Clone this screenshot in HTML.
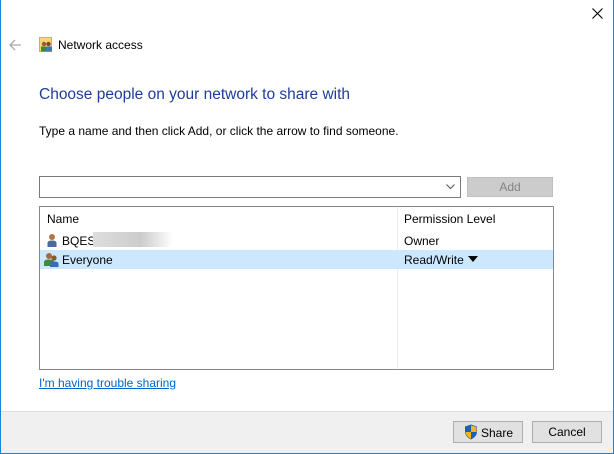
<!DOCTYPE html>
<html><head><meta charset="utf-8"><style>
*{margin:0;padding:0;box-sizing:border-box}
body{width:614px;height:454px;overflow:hidden;background:#fff;font-family:"Liberation Sans",sans-serif;font-size:12px;color:#000;position:relative}
.a{position:absolute}
.frame{left:0;top:0;width:614px;height:454px;border:1px solid #1883d7;border-top:none}
</style></head><body>
<div class="a frame"></div>
<svg class="a" style="left:592px;top:8px" width="11" height="11"><path d="M0.5 0.5L10.5 10.5M10.5 0.5L0.5 10.5" stroke="#000" stroke-width="1.1"/></svg>
<svg class="a" style="left:9px;top:39px" width="13" height="12"><path d="M1 6H12M6 1L1 6L6 11" stroke="#aaa" stroke-width="1.3" fill="none"/></svg>
<svg class="a" style="left:39px;top:37px" width="14" height="15"><rect x="0.5" y="0.5" width="12" height="14" fill="#f6d67a" stroke="#d9b040"/><circle cx="5" cy="7" r="2.2" fill="#a05a30"/><rect x="2" y="9.5" width="6" height="5" fill="#3b8a3b"/><circle cx="9.5" cy="7" r="2.2" fill="#7a4a2a"/><rect x="7" y="9.5" width="6" height="5" fill="#3a78c0"/></svg>
<div class="a" style="left:58px;top:38px;font-size:12px">Network access</div>
<div class="a" style="left:39px;top:86px;font-size:15.5px;color:#1e3d9a">Choose people on your network to share with</div>
<div class="a" style="left:39px;top:124px">Type a name and then click Add, or click the arrow to find someone.</div>
<div class="a" style="left:39px;top:176px;width:422px;height:22px;border:1px solid #7a7a7a"></div>
<svg class="a" style="left:446px;top:184px" width="9" height="6"><path d="M0.5 0.5L4.5 4.5L8.5 0.5" stroke="#555" fill="none"/></svg>
<div class="a" style="left:467px;top:177px;width:86px;height:20px;background:#ccc;border:1px solid #bfbfbf;color:#838383;text-align:center;line-height:18px">Add</div>
<div class="a" style="left:39px;top:206px;width:515px;height:164px;border:1px solid #828790"></div>
<div class="a" style="left:397px;top:207px;width:1px;height:162px;background:#e8eef7"></div>
<div class="a" style="left:47px;top:212px">Name</div>
<div class="a" style="left:404px;top:212px">Permission Level</div>
<svg class="a" style="left:47px;top:233px" width="10" height="14"><circle cx="5" cy="4" r="3" fill="#b07848"/><path d="M0.5 14V10Q0.5 7.5 5 7.5Q9.5 7.5 9.5 10V14Z" fill="#4a6aa0"/></svg>
<div class="a" style="left:62px;top:234px">BQES</div>
<div class="a" style="left:93px;top:232px;width:80px;height:15px;background:linear-gradient(90deg,#ddd,#ccc 60%,#fff)"></div>
<div class="a" style="left:404px;top:234px">Owner</div>
<div class="a" style="left:40px;top:250px;width:513px;height:19px;background:#cce8ff"></div>
<svg class="a" style="left:43px;top:252px" width="17" height="15"><circle cx="6" cy="4" r="3" fill="#a86a3a"/><path d="M1 14V10Q1 7.5 6 7.5Q11 7.5 11 10V14Z" fill="#3f8a3f"/><circle cx="11" cy="6" r="2.6" fill="#8a5a2a"/><path d="M7 15V11.5Q7 9.5 11 9.5Q15.5 9.5 15.5 11.5V15Z" fill="#3a6cb8"/></svg>
<div class="a" style="left:62px;top:253px">Everyone</div>
<div class="a" style="left:404px;top:253px">Read/Write</div>
<svg class="a" style="left:468px;top:256px" width="10" height="6"><path d="M0 0H10L5 6Z" fill="#000"/></svg>
<div class="a" style="left:39px;top:376px;color:#0066cc;text-decoration:underline">I'm having trouble sharing</div>
<div class="a" style="left:1px;top:411px;width:612px;height:42px;background:#f0f0f0;border-top:1px solid #dfdfdf"></div>
<div class="a" style="left:453px;top:421px;width:70px;height:22px;background:#e1e1e1;border:1px solid #adadad"></div>
<svg class="a" style="left:464px;top:424px" width="14" height="16"><path d="M7 0.5L13 2.5V8Q13 12.5 7 15.5Q1 12.5 1 8V2.5Z" fill="#1d5fb8"/><path d="M7 1.5V8H12.5V2.9Z" fill="#f2b51c"/><path d="M7 8V14.8Q1.6 12 1.6 8Z" fill="#f2b51c"/></svg>
<div class="a" style="left:481px;top:426px">Share</div>
<div class="a" style="left:532px;top:421px;width:70px;height:22px;background:#e1e1e1;border:1px solid #adadad;text-align:center;line-height:20px">Cancel</div>
</body></html>
